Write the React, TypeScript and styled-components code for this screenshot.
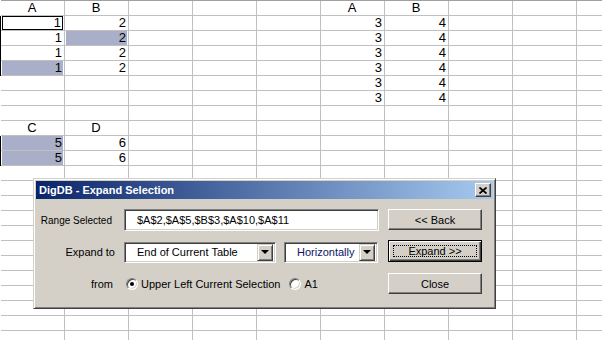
import React from 'react';
import styled, { createGlobalStyle } from 'styled-components';

const GlobalStyle = createGlobalStyle`
  html, body {
    margin: 0;
    padding: 0;
    background: #ffffff;
    overflow: hidden;
  }
  body {
    font-family: "Liberation Sans", Arial, sans-serif;
  }
`;

const Page = styled.div`
  position: relative;
  width: 602px;
  height: 340px;
  overflow: hidden;
`;

/* spreadsheet */

const Sheet = styled.div`
  display: grid;
  grid-template-columns: repeat(10, 64px);
  grid-auto-rows: 15px;
  width: 640px;
  margin-left: 1px;
  border-top: 1px solid #a0a0a0;
`;

const Cell = styled.div<{ $mark: boolean }>`
  box-sizing: border-box;
  border-right: 1px solid #c0c0c0;
  border-bottom: 1px solid #c0c0c0;
  padding: 0 1px;
  box-shadow: ${({ $mark }) => ($mark ? '-1px 0 0 #000' : 'none')};
`;

const CellInner = styled.div<{ $sel: boolean; $active: boolean; $center: boolean }>`
  box-sizing: border-box;
  height: 14px;
  padding-right: 1px;
  font-size: 13px;
  color: #000;
  text-align: ${({ $center }) => ($center ? 'center' : 'right')};
  background: ${({ $sel }) => ($sel ? '#a9aec9' : 'transparent')};
  border: ${({ $active }) => ($active ? '1px solid #000' : 'none')};
  line-height: ${({ $active }) => ($active ? '12px' : '14px')};
`;

type CellData = { text: string; center?: boolean; sel?: boolean; active?: boolean };

const cellMap: Record<string, CellData> = {
  '0,0': { text: 'A', center: true },
  '0,1': { text: 'B', center: true },
  '0,5': { text: 'A', center: true },
  '0,6': { text: 'B', center: true },
  '8,0': { text: 'C', center: true },
  '8,1': { text: 'D', center: true },
};
for (let r = 1; r <= 4; r++) {
  cellMap[`${r},0`] = { text: '1', active: r === 1, sel: r === 4 };
  cellMap[`${r},1`] = { text: '2', sel: r === 2 };
}
for (let r = 1; r <= 6; r++) {
  cellMap[`${r},5`] = { text: '3' };
  cellMap[`${r},6`] = { text: '4' };
}
for (let r = 9; r <= 10; r++) {
  cellMap[`${r},0`] = { text: '5', sel: true };
  cellMap[`${r},1`] = { text: '6' };
}
const markedRows = [1, 2, 3, 4, 9, 10];

/* dialog */

const Dialog = styled.div`
  position: absolute;
  left: 33px;
  top: 178px;
  width: 463px;
  height: 131px;
  box-sizing: border-box;
  background: #d4d0c8;
  border: 1px solid;
  border-color: #d4d0c8 #404040 #404040 #d4d0c8;
  box-shadow: inset 1px 1px 0 #fff, inset -1px -1px 0 #808080;
  padding: 2px;
  font-size: 11px;
  color: #000;
`;

const TitleBar = styled.div`
  height: 18px;
  display: flex;
  align-items: center;
  justify-content: space-between;
  padding: 0 2px 0 3px;
  background: linear-gradient(to right, #0a246a, #a6caf0);
`;

const Title = styled.span`
  color: #fff;
  font-weight: bold;
  font-size: 11px;
`;

const CloseBox = styled.div`
  box-sizing: border-box;
  width: 16px;
  height: 14px;
  display: flex;
  align-items: center;
  justify-content: center;
  background: #d4d0c8;
  border: 1px solid;
  border-color: #fff #404040 #404040 #fff;
  box-shadow: inset -1px -1px 0 #808080;
`;

const Body = styled.div`
  display: grid;
  grid-template-columns: 79px 255px 94px;
  grid-template-rows: 22px 22px 22px;
  column-gap: 9px;
  row-gap: 10px;
  padding: 10px 11px 0 0;
`;

const Label = styled.div<{ $pad: number; $size?: number }>`
  align-self: center;
  text-align: right;
  padding-right: ${({ $pad }) => $pad}px;
  font-size: ${({ $size }) => $size ?? 11}px;
  white-space: nowrap;
`;

const Sunken = styled.div`
  box-sizing: border-box;
  display: flex;
  align-items: center;
  background: #fff;
  border: 1px solid;
  border-color: #808080 #fff #fff #808080;
  box-shadow: inset 1px 1px 0 #404040, inset -1px -1px 0 #d4d0c8;
`;

const TextField = styled(Sunken)`
  height: 22px;
  padding-left: 12px;
  white-space: nowrap;
`;

const ComboRow = styled.div`
  display: flex;
  align-items: center;
  gap: 8px;
`;

const Combo = styled(Sunken)<{ $w: number }>`
  width: ${({ $w }) => $w}px;
  height: 21px;
  padding: 2px;
`;

const ComboText = styled.span<{ $navy?: boolean }>`
  flex: 1;
  padding-left: 10px;
  white-space: nowrap;
  overflow: hidden;
  color: ${({ $navy }) => ($navy ? '#0c1466' : '#000')};
`;

const DropButton = styled.div`
  box-sizing: border-box;
  width: 16px;
  height: 17px;
  display: flex;
  align-items: center;
  justify-content: center;
  background: #d4d0c8;
  border: 1px solid;
  border-color: #d4d0c8 #404040 #404040 #d4d0c8;
  box-shadow: inset 1px 1px 0 #fff, inset -1px -1px 0 #808080;
`;

const Arrow = styled.span`
  width: 0;
  height: 0;
  border-left: 4px solid transparent;
  border-right: 4px solid transparent;
  border-top: 4px solid #000;
`;

const RadioRow = styled.div`
  display: flex;
  align-items: center;
  gap: 9px;
  padding-left: 2px;
`;

const RadioItem = styled.label`
  display: flex;
  align-items: center;
  gap: 3px;
  white-space: nowrap;
`;

const RadioDot = styled.span<{ $on: boolean }>`
  box-sizing: border-box;
  width: 12px;
  height: 12px;
  border-radius: 50%;
  background: #fff;
  border: 1px solid;
  border-color: #808080 #fff #fff #808080;
  box-shadow: inset 1px 1px 0 #404040, inset -1px -1px 0 #d4d0c8;
  display: flex;
  align-items: center;
  justify-content: center;

  &::after {
    content: '';
    width: 4px;
    height: 4px;
    border-radius: 50%;
    background: ${({ $on }) => ($on ? '#000' : 'transparent')};
  }
`;

const Button = styled.button<{ $default?: boolean }>`
  box-sizing: border-box;
  align-self: start;
  width: 94px;
  height: ${({ $default }) => ($default ? 22 : 21)}px;
  margin-top: ${({ $default }) => ($default ? -1 : 0)}px;
  padding: ${({ $default }) => ($default ? '4px' : '0')};
  display: flex;
  align-items: stretch;
  justify-content: center;
  background: #d4d0c8;
  font-family: "Liberation Sans", Arial, sans-serif;
  font-size: 11px;
  color: #000;
  border: 1px solid;
  border-color: ${({ $default }) => ($default ? '#000' : '#fff #404040 #404040 #fff')};
  box-shadow: ${({ $default }) =>
    $default
      ? 'inset 1px 1px 0 #fff, inset -1px -1px 0 #404040, inset -2px -2px 0 #808080'
      : 'inset -1px -1px 0 #808080'};
`;

const ButtonText = styled.span`
  flex: 1;
  display: flex;
  align-items: center;
  justify-content: center;
`;

const FocusRing = styled.span`
  flex: 1;
  display: flex;
  align-items: center;
  justify-content: center;
  border: 1px dotted #000;
`;

export default function App() {
  const rows = 23;
  const cols = 10;
  const cells: React.ReactNode[] = [];
  for (let r = 0; r < rows; r++) {
    for (let c = 0; c < cols; c++) {
      const d = cellMap[`${r},${c}`];
      cells.push(
        <Cell key={`${r}-${c}`} $mark={c === 0 && markedRows.includes(r)}>
          <CellInner $sel={!!d?.sel} $active={!!d?.active} $center={!!d?.center}>
            {d?.text}
          </CellInner>
        </Cell>
      );
    }
  }

  return (
    <Page>
      <GlobalStyle />
      <Sheet>{cells}</Sheet>

      <Dialog>
        <TitleBar>
          <Title>DigDB - Expand Selection</Title>
          <CloseBox>
            <svg width="8" height="7" viewBox="0 0 8 7">
              <path d="M0.5 0.5 L7.5 6.5 M7.5 0.5 L0.5 6.5" stroke="#000" strokeWidth="1.7" fill="none" />
            </svg>
          </CloseBox>
        </TitleBar>

        <Body>
          <Label $pad={3} $size={10}>Range Selected</Label>
          <TextField>$A$2,$A$5,$B$3,$A$10,$A$11</TextField>
          <Button>
            <ButtonText>&lt;&lt; Back</ButtonText>
          </Button>

          <Label $pad={0}>Expand to</Label>
          <ComboRow>
            <Combo $w={152}>
              <ComboText>End of Current Table</ComboText>
              <DropButton>
                <Arrow />
              </DropButton>
            </Combo>
            <Combo $w={94}>
              <ComboText $navy>Horizontally</ComboText>
              <DropButton>
                <Arrow />
              </DropButton>
            </Combo>
          </ComboRow>
          <Button $default>
            <FocusRing>Expand &gt;&gt;</FocusRing>
          </Button>

          <Label $pad={2}>from</Label>
          <RadioRow>
            <RadioItem>
              <RadioDot $on />
              Upper Left Current Selection
            </RadioItem>
            <RadioItem>
              <RadioDot $on={false} />
              A1
            </RadioItem>
          </RadioRow>
          <Button>
            <ButtonText>Close</ButtonText>
          </Button>
        </Body>
      </Dialog>
    </Page>
  );
}
